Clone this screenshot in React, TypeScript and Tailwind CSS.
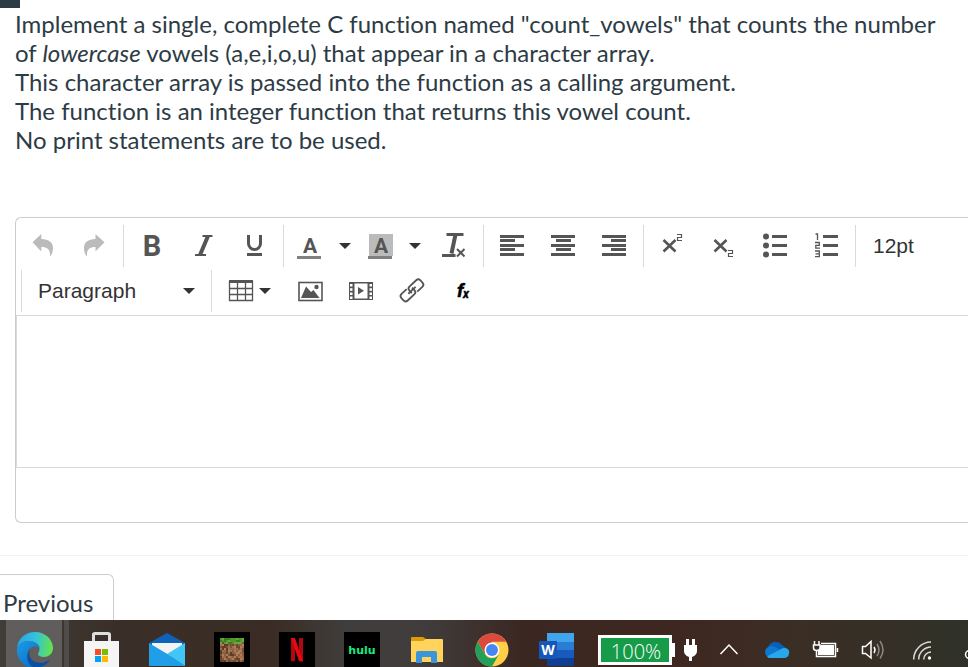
import type { ReactNode } from "react";

type IconProps = { width?: number; children: ReactNode };

function Icon({ width = 51, children }: IconProps) {
  return (
    <svg width={width} height={42} viewBox={`0 0 ${width} 42`} fill="#555" aria-hidden="true">
      {children}
    </svg>
  );
}

function Tool({ label, disabled, width, children }: IconProps & { label: string; disabled?: boolean }) {
  return (
    <button type="button" aria-label={label} disabled={disabled} className="block shrink-0">
      <Icon width={width}>{children}</Icon>
    </button>
  );
}

function Group({ first, children }: { first?: boolean; children: ReactNode }) {
  return (
    <div className={first ? "flex shrink-0 pr-[3px] pl-0.5" : "flex shrink-0 border-l border-[#d9d9d9] px-[3px]"}>
      {children}
    </div>
  );
}

function Bars({ short }: { short: number }) {
  return (
    <g shapeRendering="crispEdges">
      <rect x="13" y="10" width="24" height="3" />
      <rect x={short} y="14" width="15" height="3" />
      <rect x="13" y="19" width="24" height="3" />
      <rect x={short} y="23" width="15" height="3" />
      <rect x="13" y="28" width="24" height="3" />
    </g>
  );
}

function SmallTwo({ x, y }: { x: number; y: number }) {
  return (
    <path
      transform={`translate(${x} ${y})`}
      d="M0 .5H4.500V3.500H.5V6.500H5"
      fill="none"
      stroke="#555"
      strokeWidth="1.200"
    />
  );
}

function Toolbar() {
  return (
    <div role="toolbar" aria-label="Formatting" className="flex flex-col gap-[3px] border-b border-[#d9d9d9] pt-[7px] pb-[3px]">
      <div className="flex h-[42px] overflow-hidden">
        <Group first>
          <Tool label="Undo" disabled>
            <path fill="#bbb" d="M14.500 17.300 23.300 9v5C31 14 35 17.500 35 23c0 3.500-1 6.500-3 8.600C32.600 25 30 22 23.300 22v4.500Z" />
          </Tool>
          <Tool label="Redo" disabled>
            <path fill="#bbb" d="M35.500 17.300 26.500 9v5C19 14 15 17.500 15 23c0 3.500 1 6.500 3 8.600C17.400 25 20 22 26.500 22v4.500Z" />
          </Tool>
        </Group>
        <Group>
          <Tool label="Bold">
            <text x="25" y="31" textAnchor="middle" fontSize="29" fontWeight="700" fontFamily="Roboto, sans-serif">B</text>
          </Tool>
          <Tool label="Italic">
            <g stroke="#555" fill="none">
              <path d="M24.500 11H34.500M17 30H28" strokeWidth="2" />
              <path d="M30 11 22 30" strokeWidth="4" />
            </g>
          </Tool>
          <Tool label="Underline">
            <g stroke="#555" fill="none">
              <path d="M19.500 10v8.500a6 6 0 0 0 12 0V10" strokeWidth="3" />
              <path d="M18 29.500H33" strokeWidth="3" />
            </g>
          </Tool>
        </Group>
        <Group>
          <Tool label="Text color" width={71}>
            <text x="23" y="28" textAnchor="middle" fontSize="21" fontWeight="700" fontFamily="Roboto, sans-serif">A</text>
            <rect x="10" y="31" width="24" height="3" fill="#808080" />
            <path d="M52 18H64L58 24Z" fill="#333" />
          </Tool>
          <Tool label="Background color" width={71}>
            <rect x="11" y="9" width="24" height="22" fill="#bbb" />
            <text x="23" y="28" textAnchor="middle" fontSize="21" fontWeight="700" fontFamily="Roboto, sans-serif">A</text>
            <rect x="10" y="31" width="24" height="3" fill="#808080" />
            <path d="M51 18H63L57 24Z" fill="#333" />
          </Tool>
          <Tool label="Clear formatting">
            <g stroke="#555" fill="none">
              <path d="M17.500 9.500H34.500M13 30.500H26.500" strokeWidth="3" />
              <path d="M26.500 9.500 22.500 28.500" strokeWidth="4" />
              <path d="M28 24 35.500 31.500M35.500 24 28 31.500" strokeWidth="2" />
            </g>
          </Tool>
        </Group>
        <Group>
          <Tool label="Align left"><Bars short={13} /></Tool>
          <Tool label="Align center"><Bars short={18} /></Tool>
          <Tool label="Align right"><Bars short={22} /></Tool>
        </Group>
        <Group>
          <Tool label="Superscript">
            <path d="M16.500 15 28.500 26.500M28.500 15 16.500 26.500" stroke="#555" strokeWidth="2.600" />
            <SmallTwo x={30} y={9} />
          </Tool>
          <Tool label="Subscript">
            <path d="M16.500 15 28.500 26.500M28.500 15 16.500 26.500" stroke="#555" strokeWidth="2.600" />
            <SmallTwo x={30} y={25} />
          </Tool>
          <Tool label="Bullet list">
            {[11.5, 20.5, 29.5].map((y) => (
              <g key={y}>
                <circle cx="17" cy={y} r="3" />
                <rect x="23" y={y - 1.5} width="15" height="3" />
              </g>
            ))}
          </Tool>
          <Tool label="Numbered list" width={52}>
            {[11.5, 20.5, 29.5].map((y) => (
              <rect key={y} x="23" y={y - 1.5} width="15" height="3" />
            ))}
            <g fill="none" stroke="#555" strokeWidth="1.300">
              <path d="M15.500 9H17.500V15" />
              <path d="M15 17.500H19.300V20.300H15.800V23.200H20" />
              <path d="M15 26H19.300V31.700H15M15.500 28.900H19.300" />
            </g>
          </Tool>
        </Group>
        <Group>
          <select aria-label="Font size" className="w-40 appearance-none bg-transparent pb-0.5 pl-[14px] text-[21px] text-[#333]">
            <option>12pt</option>
          </select>
        </Group>
      </div>
      <div className="flex h-[42px] pl-[5px]">
        <div className="flex w-[190px] items-center border-l border-[#d9d9d9]">
          <select aria-label="Block format" className="h-full flex-1 appearance-none bg-transparent pb-0.5 pl-4 text-[21px] text-[#333]">
            <option>Paragraph</option>
          </select>
          <svg width="12" height="6" viewBox="0 0 12 6" fill="#333" className="mr-4 shrink-0" aria-hidden="true">
            <path d="M0 0H12L6 6Z" />
          </svg>
        </div>
        <Group>
          <Tool label="Table" width={70}>
            <rect x="14" y="10" width="24" height="3" />
            <path d="M14.500 11V30.500H37.500V11M22.500 13V30M30.500 13V30M14 18.500H38M14 24.500H38" fill="none" stroke="#555" strokeWidth="1.300" />
            <path d="M44 18H56L50 24Z" fill="#333" />
          </Tool>
          <Tool label="Insert image">
            <rect x="14" y="12.500" width="23" height="18" fill="none" stroke="#555" strokeWidth="1.600" />
            <path d="M16 28 21 16.500 26 22 28.500 20 34.500 28Z" />
            <circle cx="31.500" cy="17" r="2.200" />
          </Tool>
          <Tool label="Insert media">
            <path d="M13 12H37V30H13Z" />
            <path fill="#fff" d="M18.500 13.500H31.500V28.500H18.500ZM14 14h2.500v2.500H14ZM14 18.300h2.500v2.500H14ZM14 22.500h2.500v2.500H14ZM14 26.500h2.500V29H14ZM33.500 14H36v2.500h-2.500ZM33.500 18.300H36v2.500h-2.500ZM33.500 22.500H36v2.500h-2.500ZM33.500 26.500H36V29h-2.500Z" />
            <path d="M22 17 28 20.800 22 24.500Z" />
          </Tool>
          <Tool label="Insert link">
            <g fill="none" stroke="#555" strokeWidth="1.800" transform="rotate(-43 24.800 20.500)">
              <path d="M23 22.500V19a3 3 0 0 1 3-3h9a3 3 0 0 1 3 3v3a3 3 0 0 1-3 3h-7" />
              <path d="M27 18.500V22a3 3 0 0 1-3 3h-9a3 3 0 0 1-3-3v-3a3 3 0 0 1 3-3h7" />
              <path d="M20 20.500h10" />
            </g>
          </Tool>
          <Tool label="Insert equation">
            <text x="19" y="27" fill="#000" stroke="#000" strokeWidth=".5" fontSize="19" fontWeight="700" fontStyle="italic" fontFamily="Roboto, sans-serif">f</text>
            <text x="25" y="28" fill="#000" stroke="#000" strokeWidth=".4" fontSize="12" fontWeight="700" fontStyle="italic" fontFamily="Roboto, sans-serif">x</text>
          </Tool>
        </Group>
      </div>
    </div>
  );
}

const dirt = ["#8a5f40", "#6d482f", "#a0714d", "#79533a", "#94694a", "#5b3c28", "#b07d58"];
const grass = ["#4f9a2c", "#3f7d22", "#5fb035"];

function MinecraftIcon() {
  const cells: ReactNode[] = [];
  for (let row = 0; row < 12; row++) {
    for (let col = 0; col < 12; col++) {
      const n = (row * row * 37 + col * col * 53 + row * col * 29) % 101;
      const isGrass = row < 2 || (row === 2 && n % 3 !== 0);
      const fill = isGrass ? grass[n % 3] : dirt[n % 7];
      cells.push(<rect key={`${row}-${col}`} x={6 + col * 2} y={6 + row * 2} width="2" height="2" fill={fill} />);
    }
  }
  return (
    <>
      <rect width="36" height="36" />
      {cells}
    </>
  );
}

function Glyph({ children }: { children: ReactNode }) {
  return (
    <svg width="36" height="36" viewBox="0 0 36 36" className="shrink-0" aria-hidden="true">
      {children}
    </svg>
  );
}

function TaskButton({ label, children }: { label: string; children: ReactNode }) {
  return (
    <button type="button" aria-label={label} className="flex h-full w-[65px] shrink-0 items-start overflow-hidden pt-3 pl-[15px]">
      <Glyph>{children}</Glyph>
    </button>
  );
}

function TrayButton({ label, children }: { label: string; children: ReactNode }) {
  return (
    <button type="button" aria-label={label} className="h-full w-12 shrink-0">
      <svg width="48" height="47" viewBox="0 0 48 47" fill="none" stroke="#fff" strokeWidth="1.500" aria-hidden="true">
        {children}
      </svg>
    </button>
  );
}

function Taskbar() {
  return (
    <footer className="flex h-[47px] shrink-0 overflow-hidden bg-[linear-gradient(90deg,#403c38_0%,#3a2f28_12%,#3a2c24_28%,#403e3d_36%,#403c3b_44%,#3b2722_54%,#3e2720_70%,#3b2e25_82%,#2f3128_100%)]">
      <button type="button" aria-label="Edge" className="ml-1.5 flex w-14 shrink-0 items-start overflow-hidden bg-[#605e5c] pt-3 pl-[11px]">
        <Glyph>
          <defs>
            <linearGradient id="edgeTop" x1="0" y1=".4" x2="1" y2=".5">
              <stop offset="0" stopColor="#2ba4e8" />
              <stop offset=".5" stopColor="#33c2dc" />
              <stop offset="1" stopColor="#65e546" />
            </linearGradient>
            <linearGradient id="edgeLeft" x1="0" y1="0" x2=".7" y2="1">
              <stop offset="0" stopColor="#1b9de2" />
              <stop offset="1" stopColor="#0b6fce" />
            </linearGradient>
          </defs>
          <path fill="url(#edgeTop)" d="M0 16C1 6 9 0 18 0c11 0 18 8 18 16 0 6-5 9-9 9-4 0-6-1.500-6-3 0-1 1.500-2 1.500-5 0-5-5-8-11-8C6 9 2 12 0 16Z" />
          <path fill="url(#edgeLeft)" d="M0 18C0 12 5 9 11.500 9c6 0 11 3 11 7-6-4-13 1-12 8 .5 6 5 11 10 12h-3C8 36 0 28 0 18Z" />
          <path fill="#0f4f9e" d="M14.500 16.500C10 21 12.500 28 19 30c5 1.500 10 .5 14-2.500C30 33 25 36 19 36 10 34 7 22 14.500 16.500Z" />
        </Glyph>
      </button>
      <div className="ml-0.5 w-[5px] shrink-0 bg-[#504c49]" />
      <TaskButton label="Microsoft Store">
        <path d="M9.500 11V2.500Q9.500 1.500 11 1.500H24Q25.500 1.500 25.500 2.500V11" fill="none" stroke="#dedede" strokeWidth="3" />
        <path fill="#f5f5f5" d="M0 9H35V36H0Z" />
        <path fill="#f25022" d="M11 17h6v6h-6Z" />
        <path fill="#7fba00" d="M18 17h6v6h-6Z" />
        <path fill="#00a4ef" d="M11 24h6v6h-6Z" />
        <path fill="#ffb900" d="M18 24h6v6h-6Z" />
      </TaskButton>
      <TaskButton label="Mail">
        <path fill="#0f62ba" d="M0 11 18 1 36 11V18H0Z" />
        <path fill="#f3f3f3" d="M3 11H33V18L20 26 3 16Z" />
        <path fill="#209fe8" d="M0 11 20 23 36 34H0Z" />
        <path fill="#40c7f7" d="M36 11 18 22 36 34Z" />
        <path fill="#209fe8" d="M0 34V30L18 22 36 34Z" />
      </TaskButton>
      <TaskButton label="Minecraft">
        <MinecraftIcon />
      </TaskButton>
      <TaskButton label="Netflix">
        <rect width="36" height="36" />
        <path fill="#b00811" d="M12 6h4v23l-4 .5ZM20 6h4v23.500l-4-.5Z" />
        <path fill="#e50914" d="M12 6h4l8 23.500-4-.5Z" />
      </TaskButton>
      <TaskButton label="Hulu">
        <rect width="36" height="36" />
        <text x="18" y="22" textAnchor="middle" fill="#1ce783" fontSize="11" fontWeight="800" fontFamily="'DejaVu Sans', sans-serif">hulu</text>
      </TaskButton>
      <TaskButton label="File Explorer">
        <path fill="#e09a07" d="M2 6Q2 5 3 5H14L17 7V12H2Z" />
        <path fill="#ffd35c" d="M2 9H14L17 7H33Q34 7 34 8V30H2Z" />
        <path fill="#3a95dd" d="M9 19H26Q28 19 28 21V31H22V25H13V31H7V21Q7 19 9 19Z" />
      </TaskButton>
      <TaskButton label="Chrome">
        <circle cx="18" cy="18" r="16.500" fill="#ffcf48" />
        <path fill="#da4b3d" d="M3.700 9.700A16.500 16.500 0 0 1 32.300 9.700H18L10.800 22.100Z" />
        <path fill="#22a05b" d="M3.700 9.700A16.500 16.500 0 0 0 18 34.500L25.200 22.100A8.300 8.300 0 0 1 10.800 22.100Z" />
        <circle cx="18" cy="18" r="7.500" fill="#fff" />
        <circle cx="18" cy="18" r="6" fill="#4687f4" />
      </TaskButton>
      <TaskButton label="Word">
        <rect x="8" y="1" width="27" height="9" fill="#41a5ee" />
        <rect x="8" y="10" width="27" height="8" fill="#2b7cd3" />
        <rect x="8" y="18" width="27" height="8" fill="#185abd" />
        <rect x="8" y="26" width="27" height="8" fill="#103f91" />
        <rect x="0" y="9" width="18" height="18" rx="1" fill="#1656b8" />
        <text x="9" y="23" textAnchor="middle" fill="#fff" fontSize="14" fontWeight="700" fontFamily="'Open Sans', sans-serif">W</text>
      </TaskButton>
      <div className="mt-[15px] ml-[9px] flex h-[30px] shrink-0 items-center">
        <div className="flex h-[30px] w-[74px] items-center justify-center border-[3px] border-white bg-[#169c48] pt-0.5 pl-0.5 font-['Open_Sans',sans-serif] text-[20px] font-light text-white">
          100%
        </div>
        <div className="h-[14px] w-[3px] bg-white" />
      </div>
      <svg width="30" height="47" viewBox="0 0 30 47" fill="#fff" className="shrink-0" aria-hidden="true">
        <path d="M11 19h3v7h-3ZM17 19h3v7h-3ZM9 25H22V31Q22 35 17 37V41H14V37Q9 35 9 31Z" />
      </svg>
      <TrayButton label="Show hidden icons">
        <path d="M15.500 34 24 25 32.500 34" />
      </TrayButton>
      <TrayButton label="OneDrive">
        <g stroke="none">
          <path fill="#0a5fb4" d="M15 27C17 22 23 20 28 24L33 28 22 33Z" />
          <path fill="#0d78d0" d="M17 26.500C21 25 24 28 28 31L17 37.500C11 37 10 27.500 17 26.500Z" />
          <path fill="#28a8ea" d="M14 36.500 29 28.500C34 27 37 30 36 34Q35 38 31 38H17Q15 38 14 36.500Z" />
        </g>
      </TrayButton>
      <TrayButton label="Battery">
        <path d="M20 23.500H34.500V36.500H15.500V31M36.500 28V32" />
        <path d="M20 25H33V35H17V30Z" fill="#fff" stroke="none" />
        <path d="M12.500 25H19V28Q19 30.500 15.800 30.500T12.500 28ZM13.500 21V25M18 21V25" fill="#3b2e25" />
      </TrayButton>
      <TrayButton label="Volume">
        <path d="M13.500 26.500H16.500L22 21.500V38L16.500 33.500H13.500Z" />
        <path d="M25 27Q27 30 25 33" />
        <path d="M28 24Q32 30 28 36M31 21Q37 30 31 38.500" stroke="#8e8780" />
      </TrayButton>
      <TrayButton label="Network">
        <g stroke="#dddbd6">
          <path d="M16.700 39.500A17.500 17.500 0 0 1 34 22" />
          <path d="M21.700 39.500A12.500 12.500 0 0 1 34 27" />
          <path d="M26.700 39.500A7.500 7.500 0 0 1 34 32" />
        </g>
        <circle cx="32.500" cy="38" r="1.700" fill="#fff" stroke="none" />
      </TrayButton>
      <TrayButton label="Input">
        <circle cx="24.500" cy="34.500" r="4" />
      </TrayButton>
    </footer>
  );
}

export default function App() {
  return (
    <div className="flex h-screen flex-col overflow-hidden bg-white font-[Lato,sans-serif] text-[24px] leading-[29px] text-[#2d3b45] [font-variant-ligatures:none]">
      <main className="flex min-h-0 flex-1 flex-col overflow-hidden">
        <div className="h-2 w-5 shrink-0 bg-[#2d3b45]" />
        <p className="mt-px pr-8 pl-[15px]">
          Implement a single, complete C function named "count_vowels" that counts the number of <em>lowercase</em> vowels
          (a,e,i,o,u) that appear in a character array.
          <br />
          This character array is passed into the function as a calling argument.
          <br />
          The function is an integer function that returns this vowel count.
          <br />
          No print statements are to be used.
        </p>
        <section
          aria-label="Answer editor"
          className="mt-[63px] ml-[15px] shrink-0 rounded-l-md border border-r-0 border-[#c7cdd1] font-['Liberation_Sans',Arial,sans-serif]"
        >
          <Toolbar />
          <textarea
            aria-label="Answer"
            className="block h-[152px] w-full resize-none border-b border-l border-[#d9d9d9] p-3 outline-none"
          />
          <div className="h-[54px]" />
        </section>
        <hr className="mt-8 shrink-0 border-[#f1f2f3]" />
        <button
          type="button"
          className="mt-[18px] h-14 w-[114px] shrink-0 rounded-tr-md border-t border-r border-[#c7cdd1] pl-[3px] text-left"
        >
          Previous
        </button>
      </main>
      <Taskbar />
    </div>
  );
}
